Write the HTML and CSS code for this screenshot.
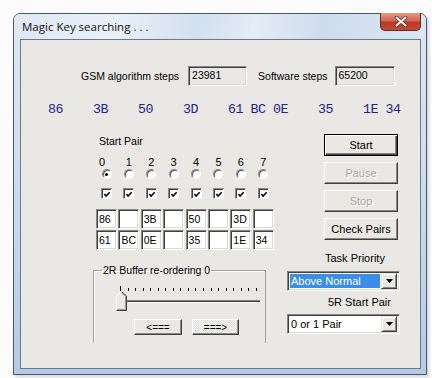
FILE: index.html
```html
<!DOCTYPE html>
<html>
<head>
<meta charset="utf-8">
<title>Magic Key searching</title>
<link rel="stylesheet" href="styles.css">
</head>
<body>
<div class="window">
  <div class="titlebar">
    <span class="title">Magic Key searching . . .</span>
    <div class="close">
      <svg width="14" height="11" viewBox="0 0 14 11"><path d="M2.5 1.5 L11.5 9.5 M11.5 1.5 L2.5 9.5" stroke="#6a2a22" stroke-width="3.6" stroke-linecap="round"/><path d="M2.5 1.5 L11.5 9.5 M11.5 1.5 L2.5 9.5" stroke="#ffffff" stroke-width="2" stroke-linecap="round"/></svg>
    </div>
  </div>
  <div class="client">
    <div class="steps">
      <span class="lbl">GSM algorithm steps</span>
      <div class="field f1">23981</div>
      <span class="lbl l2">Software steps</span>
      <div class="field f2">65200</div>
    </div>
    <pre class="hex">86    3B    50    3D    61 BC 0E    35    1E 34</pre>
    <div class="main">
      <div class="left">
        <div class="sp-label">Start Pair</div>
        <div class="pairs">
          <span class="num first">0</span><span class="num">1</span><span class="num">2</span><span class="num">3</span><span class="num">4</span><span class="num">5</span><span class="num">6</span><span class="num">7</span>
          <span class="radio on"></span><span class="radio"></span><span class="radio"></span><span class="radio"></span><span class="radio"></span><span class="radio"></span><span class="radio"></span><span class="radio"></span>
          <span class="check"><svg width="9" height="9" viewBox="0 0 9 9"><path d="M1.5 4 L3.5 6.3 L7.5 2" fill="none" stroke="#000" stroke-width="1.7"/></svg></span>
          <span class="check"><svg width="9" height="9" viewBox="0 0 9 9"><path d="M1.5 4 L3.5 6.3 L7.5 2" fill="none" stroke="#000" stroke-width="1.7"/></svg></span>
          <span class="check"><svg width="9" height="9" viewBox="0 0 9 9"><path d="M1.5 4 L3.5 6.3 L7.5 2" fill="none" stroke="#000" stroke-width="1.7"/></svg></span>
          <span class="check"><svg width="9" height="9" viewBox="0 0 9 9"><path d="M1.5 4 L3.5 6.3 L7.5 2" fill="none" stroke="#000" stroke-width="1.7"/></svg></span>
          <span class="check"><svg width="9" height="9" viewBox="0 0 9 9"><path d="M1.5 4 L3.5 6.3 L7.5 2" fill="none" stroke="#000" stroke-width="1.7"/></svg></span>
          <span class="check"><svg width="9" height="9" viewBox="0 0 9 9"><path d="M1.5 4 L3.5 6.3 L7.5 2" fill="none" stroke="#000" stroke-width="1.7"/></svg></span>
          <span class="check"><svg width="9" height="9" viewBox="0 0 9 9"><path d="M1.5 4 L3.5 6.3 L7.5 2" fill="none" stroke="#000" stroke-width="1.7"/></svg></span>
          <span class="check"><svg width="9" height="9" viewBox="0 0 9 9"><path d="M1.5 4 L3.5 6.3 L7.5 2" fill="none" stroke="#000" stroke-width="1.7"/></svg></span>
        </div>
        <div class="cells">
          <div class="cell">86</div><div class="cell"></div><div class="cell">3B</div><div class="cell"></div><div class="cell">50</div><div class="cell"></div><div class="cell">3D</div><div class="cell"></div>
          <div class="cell">61</div><div class="cell">BC</div><div class="cell">0E</div><div class="cell"></div><div class="cell">35</div><div class="cell"></div><div class="cell">1E</div><div class="cell">34</div>
        </div>
        <div class="groupwrap">
          <fieldset class="group">
            <legend>2R Buffer re-ordering 0</legend>
            <div class="ticks">
              <i class="tall"></i><i></i><i></i><i></i><i></i><i></i><i></i><i></i><i></i><i></i><i></i><i></i><i></i><i></i><i></i><i></i><i></i><i></i><i></i>
            </div>
            <div class="slider">
              <svg class="thumb" width="11" height="20" viewBox="0 0 11 20"><path d="M0.5 19.5 V5 L5.5 0.5 L10.5 5 V19.5 Z" fill="#eae8e4" stroke="none"/><path d="M0.5 19.5 V5 L5.5 0.5" fill="none" stroke="#ffffff"/><path d="M5.5 0.5 L10.5 5 V19.5 H0.5" fill="none" stroke="#404040"/><path d="M5.5 1.8 L9.5 5.4 V18.5 H1.5" fill="none" stroke="#9a9892"/></svg>
              <div class="track"></div>
            </div>
            <div class="arrows">
              <div class="btn small">&lt;===</div>
              <div class="btn small hot">===&gt;</div>
            </div>
          </fieldset>
        </div>
      </div>
      <div class="right">
        <div class="btn big default">Start</div>
        <div class="btn big disabled">Pause</div>
        <div class="btn big disabled">Stop</div>
        <div class="btn big">Check Pairs</div>
        <div class="rlabel">Task Priority</div>
        <div class="combo">
          <span class="val sel">Above Normal</span>
          <span class="drop"><svg width="7" height="4" viewBox="0 0 7 4"><path d="M0 0 H7 L3.5 4 Z" fill="#000"/></svg></span>
        </div>
        <div class="rlabel r2">5R Start Pair</div>
        <div class="combo">
          <span class="val">0 or 1 Pair</span>
          <span class="drop"><svg width="7" height="4" viewBox="0 0 7 4"><path d="M0 0 H7 L3.5 4 Z" fill="#000"/></svg></span>
        </div>
      </div>
    </div>
  </div>
</div>
</body>
</html>
```

FILE: styles.css
```css
html, body {
  margin: 0;
  padding: 0;
  background: #fbfbfb;
}
body {
  width: 432px;
  height: 378px;
  overflow: hidden;
  font-family: "Liberation Sans", Arial, sans-serif;
  font-size: 10.5px;
  color: #000;
}
.window {
  margin: 13px 0 0 13px;
  width: 412px;
  height: 360px;
  border: 1px solid #4a5868;
  border-radius: 7px 7px 0 0;
  background: linear-gradient(180deg, #dde8f4 0%, #cfdef0 40%, #b4cbe8 100%);
  box-shadow: 2px 2px 3px rgba(0,0,0,0.15);
}
.titlebar {
  height: 25px;
  display: flex;
  align-items: flex-start;
  border-radius: 6px 6px 0 0;
  background: linear-gradient(100deg, #dfe8f3 0%, #e9f0f8 25%, #d3e0ef 45%, #e4ecf6 58%, #cfdced 75%, #dbe6f2 100%);
}
.title {
  font-family: "Open Sans", "Noto Sans", sans-serif;
  font-size: 11.5px;
  color: #111;
  padding: 5px 0 0 8px;
  line-height: 16px;
}
.close {
  margin: -1px 5px 0 auto;
  width: 41px;
  height: 18px;
  border: 1px solid #6a2a22;
  border-top: none;
  border-radius: 0 0 5px 5px;
  box-sizing: border-box;
  background: linear-gradient(180deg, #e39a88 0%, #d0664f 45%, #bb3a25 55%, #c24a35 100%);
  display: flex;
  align-items: center;
  justify-content: center;
}
.client {
  margin: 0 0 0 6px;
  width: 399px;
  height: 328px;
  border: 1px solid #6b7a8a;
  background: #eae8e4;
  overflow: hidden;
}
.steps {
  display: flex;
  align-items: center;
  margin-top: 26px;
  padding-left: 60px;
}
.lbl { line-height: 13px; }
.field {
  box-sizing: border-box;
  height: 20px;
  border: 1px solid;
  border-color: #8a8884 #ffffff #ffffff #8a8884;
  box-shadow: inset 1px 1px 0 #404040, inset -1px -1px 0 #dcdad6;
  padding: 2px 0 0 3px;
  line-height: 12px;
  font-size: 10.5px;
}
.f1 { width: 59px; margin-left: 9px; }
.l2 { margin-left: 11px; }
.f2 { width: 60px; margin-left: 7px; }
.hex {
  margin: 17px 0 0 27px;
  font-family: "Liberation Mono", "Courier New", monospace;
  font-size: 13.3px;
  letter-spacing: -0.48px;
  line-height: 14px;
  color: #23238f;
}
.main {
  display: flex;
  margin-top: 17px;
}
.left {
  width: 173px;
  margin-left: 72px;
}
.sp-label {
  margin-left: 6px;
  line-height: 13px;
  padding-top: 1px;
}
.pairs {
  display: grid;
  grid-template-columns: repeat(8, 21px);
  column-gap: 1.4px;
  grid-template-rows: 13px 10px auto;
  margin: 8px 0 0 3px;
  align-items: center;
  justify-items: center;
}
.num { line-height: 13px; font-size: 11px; }
.num.first { justify-self: start; margin-left: 3px; }
.radio {
  width: 10px;
  height: 10px;
  box-sizing: border-box;
  border-radius: 50%;
  border: 1px solid;
  border-color: #8a8884 #ffffff #ffffff #8a8884;
  background: #ffffff;
  box-shadow: inset 1px 1px 0 #5a5a5a;
  display: flex;
  align-items: center;
  justify-content: center;
}
.radio.on::after {
  content: "";
  width: 3px;
  height: 3px;
  border-radius: 50%;
  background: #000;
}
.check {
  width: 11px;
  height: 11px;
  box-sizing: border-box;
  border: 1px solid;
  border-color: #8a8884 #ffffff #ffffff #8a8884;
  box-shadow: inset 1px 1px 0 #404040;
  background: #ffffff;
  display: flex;
  align-items: center;
  justify-content: center;
  margin-top: 9px;
}
.check svg { margin: 1px 0 0 1px; }
.cells {
  display: grid;
  grid-template-columns: repeat(8, 21px);
  grid-auto-rows: 20px;
  column-gap: 1.4px;
  row-gap: 1px;
  margin: 10px 0 0 3px;
}
.cell {
  box-sizing: border-box;
  border: 1px solid;
  border-color: #8a8884 #ffffff #ffffff #8a8884;
  box-shadow: inset 1px 1px 0 #404040, inset -1px -1px 0 #dcdad6;
  background: #ffffff;
  padding: 0 0 0 2px;
  line-height: 18px;
  font-size: 10.5px;
}
.groupwrap {
  margin-top: 14px;
  height: 79px;
  overflow: hidden;
}
.group {
  margin: 0;
  padding: 0;
  height: 120px;
  border: 1px solid #a3a19c;
  box-shadow: 1px 1px 0 #ffffff inset;
  min-width: 0;
  width: 173px;
  box-sizing: border-box;
}
.group legend {
  padding: 0 1px;
  margin-left: 8px;
  line-height: 13px;
  font-size: 10.5px;
}
.ticks {
  display: flex;
  justify-content: space-between;
  align-items: flex-end;
  width: 137px;
  height: 5px;
  margin: 9px 0 0 26px;
}
.ticks i {
  width: 1px;
  height: 3px;
  background: #000;
}
.ticks i.tall { height: 5px; }
.slider {
  display: flex;
  align-items: center;
  margin: 0 0 0 22px;
  height: 20px;
}
.thumb { display: block; }
.track {
  width: 134px;
  height: 3px;
  box-sizing: border-box;
  border-top: 1px solid #808080;
  border-left: 1px solid #808080;
  border-bottom: 1px solid #ffffff;
  border-right: 1px solid #ffffff;
  background: #404040;
}
.arrows {
  display: flex;
  gap: 10px;
  margin: 8px 0 0 40px;
}
.btn {
  box-sizing: border-box;
  background: #eae8e4;
  border: 1px solid;
  border-color: #ffffff #404040 #404040 #ffffff;
  box-shadow: inset -1px -1px 0 #8a8884;
  display: flex;
  align-items: center;
  justify-content: center;
  font-size: 11px;
}
.btn.small {
  width: 48px;
  height: 16px;
  font-size: 10px;
}
.btn.hot {
  width: 47px;
  background: repeating-conic-gradient(#f6f5f3 0% 25%, #e2e0dc 0% 50%) 0 0 / 2px 2px;
}
.right {
  width: 113px;
  margin-left: 21px;
}
.btn.big {
  width: 74px;
  height: 22px;
  margin: 0 0 6px 37px;
}
.btn.default {
  border-color: #000;
  box-shadow: inset 1px 1px 0 #ffffff, inset -1px -1px 0 #404040, inset -2px -2px 0 #8a8884;
}
.btn.disabled {
  color: #aaa8a4;
  text-shadow: 1px 1px 0 #ffffff;
}
.rlabel {
  margin: 12px 0 0 38px;
  line-height: 13px;
  font-size: 11px;
}
.r2 { margin: 5px 0 0 41px; }
.combo {
  box-sizing: border-box;
  height: 20px;
  margin-top: 6px;
  border: 1px solid;
  border-color: #8a8884 #ffffff #ffffff #8a8884;
  box-shadow: inset 1px 1px 0 #404040, inset -1px -1px 0 #dcdad6;
  background: #ffffff;
  display: flex;
  align-items: center;
  padding: 1px 2px 1px 2px;
}
.r2 + .combo { margin-top: 5px; }
.val {
  flex: 1;
  height: 14px;
  line-height: 14px;
  font-size: 11px;
  padding-left: 1px;
}
.val.sel {
  background: #3a8ee8;
  color: #ffffff;
}
.drop {
  width: 16px;
  height: 16px;
  box-sizing: border-box;
  background: #eae8e4;
  border: 1px solid;
  border-color: #e8e6e2 #404040 #404040 #e8e6e2;
  box-shadow: inset 1px 1px 0 #ffffff, inset -1px -1px 0 #8a8884;
  display: flex;
  align-items: center;
  justify-content: center;
  margin-left: 1px;
}
```
